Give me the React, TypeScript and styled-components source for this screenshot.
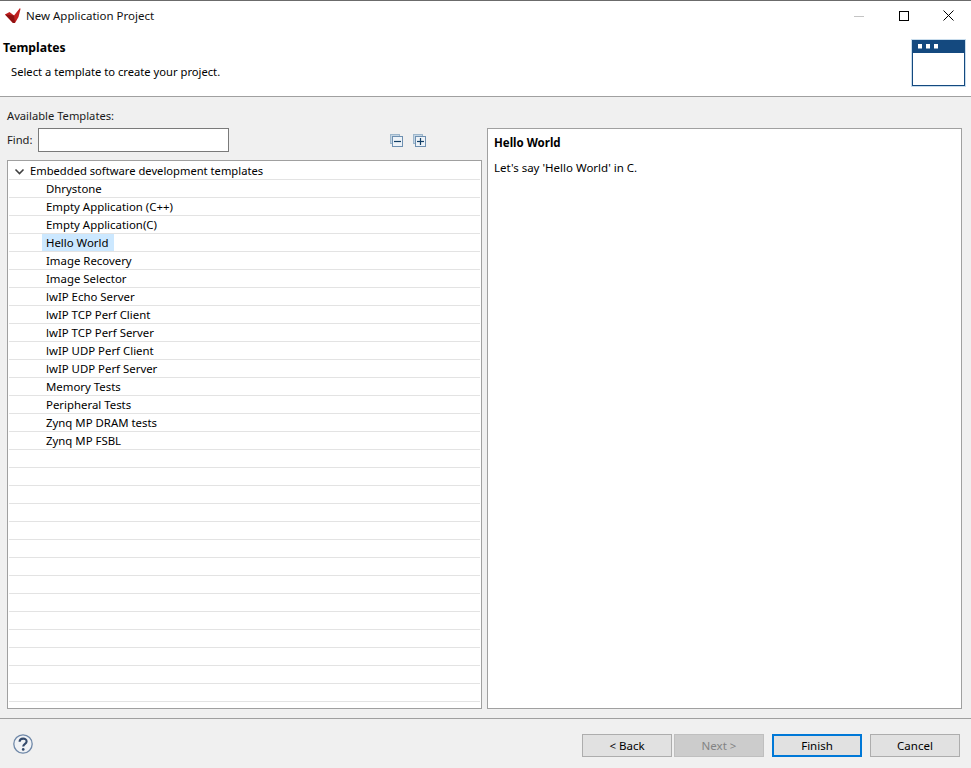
import React from "react";
import styled, { createGlobalStyle } from "styled-components";

const templates = [
  "Dhrystone",
  "Empty Application (C++)",
  "Empty Application(C)",
  "Hello World",
  "Image Recovery",
  "Image Selector",
  "lwIP Echo Server",
  "lwIP TCP Perf Client",
  "lwIP TCP Perf Server",
  "lwIP UDP Perf Client",
  "lwIP UDP Perf Server",
  "Memory Tests",
  "Peripheral Tests",
  "Zynq MP DRAM tests",
  "Zynq MP FSBL",
];

const EMPTY_ROWS = 14;

const GlobalStyle = createGlobalStyle`
  html, body {
    margin: 0;
    padding: 0;
    background: #f0f0f0;
  }
  * {
    box-sizing: border-box;
  }
`;

const Window = styled.div`
  width: 971px;
  height: 768px;
  display: flex;
  flex-direction: column;
  overflow: hidden;
  background: #f0f0f0;
  color: #000;
  font-family: "Noto Sans", "Open Sans", sans-serif;
  font-size: 11.2px;
`;

const TitleBar = styled.div`
  height: 30px;
  flex: none;
  display: flex;
  align-items: center;
  padding-left: 5px;
  background: #fff;
  border-top: 1px solid #6b6b6b;
`;

const TitleText = styled.span`
  margin-left: 5px;
  font-size: 11.5px;
  color: #111;
`;

const WindowButtons = styled.div`
  margin-left: auto;
  display: flex;
  align-items: center;
`;

const WindowButton = styled.div`
  width: 45px;
  height: 29px;
  display: flex;
  align-items: center;
  justify-content: center;
`;

const Header = styled.div`
  height: 67px;
  flex: none;
  display: flex;
  justify-content: space-between;
  padding: 9px 5px 0 3px;
  background: #fff;
  border-bottom: 1px solid #a0a0a0;
`;

const HeaderText = styled.div`
  display: flex;
  flex-direction: column;
`;

const HeaderTitle = styled.div`
  font-size: 12.2px;
  font-weight: 700;
  line-height: 17px;
`;

const HeaderHint = styled.div`
  margin: 7px 0 0 8px;
  line-height: 17px;
`;

const Body = styled.div`
  flex: 1;
  display: flex;
  flex-direction: column;
  padding: 11px 9px 9px 7px;
  min-height: 0;
`;

const SectionLabel = styled.div`
  line-height: 16px;
  margin-bottom: 4px;
  color: #1a1a1a;
`;

const Columns = styled.div`
  flex: 1;
  display: flex;
  gap: 5px;
  min-height: 0;
`;

const LeftColumn = styled.div`
  width: 475px;
  flex: none;
  display: flex;
  flex-direction: column;
`;

const FindRow = styled.div`
  height: 24px;
  flex: none;
  display: flex;
  align-items: center;
  margin-bottom: 8px;
`;

const FindLabel = styled.label`
  width: 31px;
  padding-bottom: 2px;
  color: #1a1a1a;
`;

const FindInput = styled.input`
  width: 191px;
  height: 24px;
  border: 1px solid #7a7a7a;
  background: #fff;
  outline: none;
`;

const TreeTools = styled.div`
  display: flex;
  align-items: center;
  gap: 10px;
  margin-left: 161px;
`;

const Tree = styled.div`
  flex: 1;
  min-height: 0;
  overflow: hidden;
  padding: 1px;
  background: #fff;
  border: 1px solid #a0a0a0;
`;

const Row = styled.div`
  height: 18px;
  display: flex;
  align-items: center;
  padding-left: ${(p: { $level: number }) => (p.$level === 0 ? 5 : 33)}px;
  border-bottom: 1px solid #e3e3e3;
  white-space: nowrap;
`;

const Caret = styled.svg`
  width: 11px;
  height: 12px;
  margin-right: 5px;
  flex: none;
`;

const RowLabel = styled.span<{ $selected?: boolean }>`
  height: 17px;
  line-height: 17px;
  padding: 0 5px 0 4px;
  font-size: 11.4px;
  background: ${(p) => (p.$selected ? "#cce8ff" : "transparent")};
`;

const DetailPanel = styled.div`
  flex: 1;
  padding: 5px 6px;
  background: #fff;
  border: 1px solid #a0a0a0;
  font-size: 11.5px;
`;

const DetailTitle = styled.div`
  font-weight: 700;
  line-height: 17px;
`;

const DetailText = styled.div`
  margin-top: 8px;
  line-height: 17px;
`;

const Footer = styled.div`
  height: 50px;
  flex: none;
  display: flex;
  align-items: center;
  padding: 0 11px 0 13px;
  border-top: 1px solid #a0a0a0;
`;

const HelpIcon = styled.svg`
  width: 20px;
  height: 20px;
  flex: none;
`;

const Buttons = styled.div`
  margin-left: auto;
  margin-top: 4px;
  display: flex;
  align-items: center;
  font-size: 11.5px;
`;

const Button = styled.button<{ $primary?: boolean }>`
  width: 90px;
  height: 23px;
  padding: 0;
  margin-left: ${(p) => (p.$primary ? 8 : 0)}px;
  font: inherit;
  color: #000;
  background: #e1e1e1;
  border: ${(p) => (p.$primary ? "2px solid #0078d7" : "1px solid #adadad")};

  &:disabled {
    color: #838383;
    background: #cccccc;
    border-color: #bfbfbf;
  }
`;

const CancelButton = styled(Button)`
  margin-left: 8px;
`;

const NextButton = styled(Button)`
  margin-left: 2px;
`;

const Logo = () => (
  <svg width="16" height="15" viewBox="0 0 16 15">
    <path d="M0 6.5 L4.5 4 L9 7.5 L15 0 L15.5 1 L13.5 9 L10 15 L8 15 Z" fill="#c11f1f" />
    <path d="M0 6.5 L9 7.5 L10 15 L8 15 Z" fill="#8e1212" />
  </svg>
);

const WizardBanner = () => (
  <svg width="55" height="48" viewBox="0 0 55 48">
    <rect x="0" y="0" width="55" height="48" fill="#c8dcec" />
    <rect x="1" y="1" width="53" height="46" fill="#14497f" />
    <rect x="2" y="14" width="51" height="32" fill="#fff" />
    <rect x="7" y="5" width="4" height="4.5" fill="#fff" />
    <rect x="15" y="5" width="4" height="4.5" fill="#fff" />
    <rect x="23" y="5" width="4" height="4.5" fill="#fff" />
  </svg>
);

const TreeToolIcon = ({ plus }: { plus?: boolean }) => (
  <svg width="13" height="13" viewBox="0 0 13 13">
    <rect x="0.5" y="0.5" width="9" height="9" fill="#c5d6e4" stroke="#9db6cb" />
    <rect x="2.5" y="2.5" width="10" height="10" fill="#eef3f8" stroke="#6d8fb0" />
    <path d="M4 7.5 H11" stroke="#123f66" strokeWidth="1.2" />
    {plus && <path d="M7.5 4 V11" stroke="#123f66" strokeWidth="1.2" />}
  </svg>
);

const App = () => {
  return (
    <Window>
      <GlobalStyle />
      <TitleBar>
        <Logo />
        <TitleText>New Application Project</TitleText>
        <WindowButtons>
          <WindowButton>
            <svg width="10" height="10" viewBox="0 0 10 10">
              <path d="M0 5.5 H10" stroke="#c4c4c4" />
            </svg>
          </WindowButton>
          <WindowButton>
            <svg width="10" height="10" viewBox="0 0 10 10">
              <rect x="0.5" y="0.5" width="9" height="9" fill="none" stroke="#000" />
            </svg>
          </WindowButton>
          <WindowButton>
            <svg width="11" height="11" viewBox="0 0 11 11">
              <path d="M0.5 0.5 L10.5 10.5 M10.5 0.5 L0.5 10.5" stroke="#000" />
            </svg>
          </WindowButton>
        </WindowButtons>
      </TitleBar>
      <Header>
        <HeaderText>
          <HeaderTitle>Templates</HeaderTitle>
          <HeaderHint>Select a template to create your project.</HeaderHint>
        </HeaderText>
        <WizardBanner />
      </Header>
      <Body>
        <SectionLabel>Available Templates:</SectionLabel>
        <Columns>
          <LeftColumn>
            <FindRow>
              <FindLabel>Find:</FindLabel>
              <FindInput />
              <TreeTools>
                <TreeToolIcon />
                <TreeToolIcon plus />
              </TreeTools>
            </FindRow>
            <Tree>
              <Row $level={0}>
                <Caret viewBox="0 0 11 12">
                  <path d="M1.5 4.5 L5.5 8.5 L9.5 4.5" fill="none" stroke="#404040" strokeWidth="1.6" />
                </Caret>
                Embedded software development templates
              </Row>
              {templates.map((name) => (
                <Row $level={1} key={name}>
                  <RowLabel $selected={name === "Hello World"}>{name}</RowLabel>
                </Row>
              ))}
              {Array.from({ length: EMPTY_ROWS }, (_, i) => (
                <Row $level={1} key={i} />
              ))}
            </Tree>
          </LeftColumn>
          <DetailPanel>
            <DetailTitle>Hello World</DetailTitle>
            <DetailText>Let's say 'Hello World' in C.</DetailText>
          </DetailPanel>
        </Columns>
      </Body>
      <Footer>
        <HelpIcon viewBox="0 0 20 20">
          <circle cx="10" cy="10" r="9.2" fill="#f0f2f5" stroke="#6f88a8" strokeWidth="1.3" />
          <path
            d="M6.6 7.8 C6.6 3.6 13.6 3.6 13.6 7.4 C13.6 9.9 10.2 9.7 10.2 12.6"
            fill="none"
            stroke="#33496b"
            strokeWidth="2.1"
          />
          <circle cx="10.2" cy="15.4" r="1.35" fill="#33496b" />
        </HelpIcon>
        <Buttons>
          <Button>&lt; Back</Button>
          <NextButton disabled>Next &gt;</NextButton>
          <Button $primary>Finish</Button>
          <CancelButton>Cancel</CancelButton>
        </Buttons>
      </Footer>
    </Window>
  );
};

export default App;
